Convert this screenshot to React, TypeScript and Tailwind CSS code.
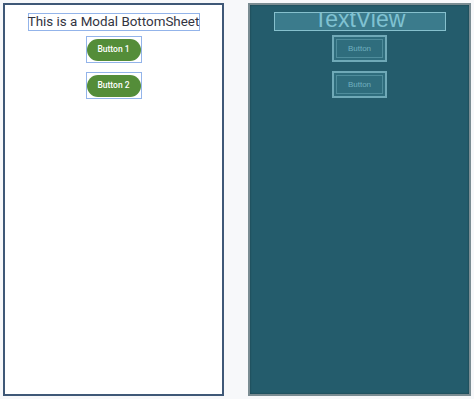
export default function App() {
  return (
    <div className="w-[474px] h-[399px] bg-[#f7f8fa] flex pt-[3px] pl-[3px] gap-[24px] overflow-hidden" style={{ fontFamily: "Roboto, 'Liberation Sans', sans-serif" }}>
      <div className="w-[221px] h-[393px] border-2 border-[#3f5877] bg-white flex flex-col items-center">
        <div className="mt-[8px] h-[18px] w-[172px] border border-[#93b4ea] flex items-center justify-center text-[13.4px] leading-none text-[#33343f] whitespace-nowrap">
          This is a Modal BottomSheet
        </div>
        <div className="mt-[5px] w-[56px] h-[27px] border border-[#93b4ea] flex items-center justify-center">
          <div className="w-[54px] h-[22px] rounded-full bg-[#548d39] flex items-center justify-center text-white text-[8.5px] font-medium">Button 1</div>
        </div>
        <div className="mt-[9px] w-[56px] h-[27px] border border-[#93b4ea] flex items-center justify-center">
          <div className="w-[54px] h-[22px] rounded-full bg-[#548d39] flex items-center justify-center text-white text-[8.5px] font-medium">Button 2</div>
        </div>
      </div>
      <div className="w-[223px] h-[393px] border-2 border-[#7a8c92] bg-[#245c6c] flex flex-col items-center shadow-[inset_0_0_2px_rgba(0,0,0,0.4)]">
        <div className="mt-[7px] h-[19px] w-[172px] border border-[#86c0cd] bg-[#3b7b8c] overflow-hidden flex justify-center" style={{ fontFamily: "'Liberation Sans', Arial, sans-serif" }}>
          <span className="text-[23px] leading-[23px] text-[#80c2d2] -mt-[5px] whitespace-nowrap">TextView</span>
        </div>
        <div className="mt-[4px] w-[55px] h-[27px] border-2 border-[#6fa9b7] bg-[#2f6d7d] flex items-center justify-center p-[2px]">
          <div className="w-full h-full border border-[#4f8d9c] flex items-center justify-center text-[8px] text-[#6fb0bf]" style={{ fontFamily: "'Liberation Sans', Arial, sans-serif" }}>Button</div>
        </div>
        <div className="mt-[9px] w-[55px] h-[27px] border-2 border-[#6fa9b7] bg-[#2f6d7d] flex items-center justify-center p-[2px]">
          <div className="w-full h-full border border-[#4f8d9c] flex items-center justify-center text-[8px] text-[#6fb0bf]" style={{ fontFamily: "'Liberation Sans', Arial, sans-serif" }}>Button</div>
        </div>
      </div>
    </div>
  );
}
